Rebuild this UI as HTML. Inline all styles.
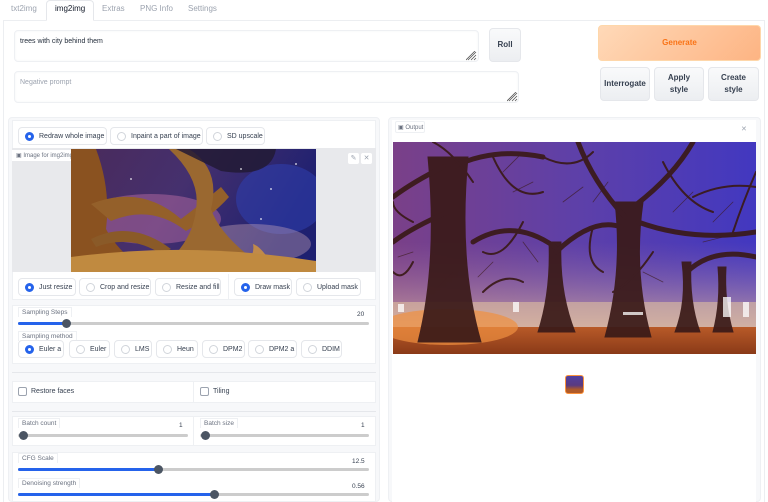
<!DOCTYPE html>
<html><head><meta charset="utf-8"><style>
*{box-sizing:border-box;margin:0;padding:0}
body{width:768px;height:502px;overflow:hidden;background:#fff;font-family:"Liberation Sans",sans-serif;font-size:7px;color:#374151;position:relative}
.a{position:absolute}
.tab{position:absolute;top:4px;font-size:8px;color:#9ca3af}
.ta{position:absolute;border:1px solid #eef0f3;border-radius:4px;background:#fff;box-shadow:inset 0 0 2px #f3f4f6}
.btn{position:absolute;border:1px solid #e5e7eb;border-radius:4px;background:linear-gradient(#f9fafb,#eceef1);font-weight:bold;font-size:8px;color:#374151;display:flex;align-items:center;justify-content:center;text-align:center;line-height:12px}
.box{position:absolute;background:#fff;border:1px solid #eef0f3}
.r{position:absolute;height:18px;border:1px solid #e5e7eb;border-radius:4px;background:#fff;font-size:7px;display:flex;align-items:center;padding-left:6px;color:#374151}
.r i{display:inline-block;width:9px;height:9px;border-radius:50%;border:1px solid #d1d5db;margin-right:5px;background:#fff}
.r i.on{border:3px solid #2563eb;background:#fff}
.lbl{position:absolute;font-size:6.5px;color:#6b7280;background:#fff;border:1px solid #eef0f3;border-bottom:none;padding:0 3px;line-height:9px}
.tr{position:absolute;height:3px;border-radius:2px;background:#ccc}
.fill{position:absolute;height:3px;border-radius:2px;background:#2563eb}
.th{position:absolute;width:9px;height:9px;border-radius:50%;background:#4b5563}
.val{position:absolute;font-size:6.5px;color:#374151}
.cb{position:absolute;width:9px;height:9px;border:1px solid #9ca3af;border-radius:2px;background:#fff}
</style></head><body>
<div class="tab" style="left:11px">txt2img</div>
<div class="a" style="left:46px;top:0;width:48px;height:21px;border:1px solid #e5e7eb;border-bottom:1px solid #fff;border-radius:4px 4px 0 0;background:#fff;z-index:2"></div>
<div class="tab" style="left:55px;color:#111827;z-index:3">img2img</div>
<div class="tab" style="left:102px">Extras</div>
<div class="tab" style="left:140px">PNG Info</div>
<div class="tab" style="left:188px">Settings</div>
<div class="a" style="left:3px;top:20px;width:762px;height:482px;border:1px solid #eceef1;border-bottom:none"></div>

<div class="ta" style="left:14px;top:30px;width:465px;height:32px"><span class="a" style="left:5px;top:7px;font-size:7px;color:#1f2937">trees with city behind them</span></div>
<div class="ta" style="left:14px;top:71px;width:505px;height:32px"><span class="a" style="left:5px;top:7px;font-size:7px;color:#9ca3af">Negative prompt</span></div>
<svg class="a" style="left:466px;top:51px" width="11" height="10"><path d="M2 9L10 1M5 9L10 4M8 9L10 7M0 9L9 0" stroke="#555" stroke-width=".8"/></svg>
<svg class="a" style="left:507px;top:92px" width="11" height="10"><path d="M2 9L10 1M5 9L10 4M8 9L10 7M0 9L9 0" stroke="#555" stroke-width=".8"/></svg>
<div class="btn" style="left:489px;top:28px;width:32px;height:34px">Roll</div>
<div class="btn" style="left:598px;top:25px;width:163px;height:36px;background:linear-gradient(135deg,#ffd9b8,#fdb483);border-color:#fed7aa;color:#f97316">Generate</div>
<div class="btn" style="left:600px;top:67px;width:50px;height:34px">Interrogate</div>
<div class="btn" style="left:654px;top:67px;width:50px;height:34px">Apply<br>style</div>
<div class="btn" style="left:708px;top:67px;width:51px;height:34px">Create<br>style</div>

<div class="a" style="left:8px;top:117px;width:372px;height:385px;background:#f7f8fa;border:1px solid #eef0f3;border-radius:4px"></div>
<div class="box" style="left:12px;top:120px;width:364px;height:180px"></div>
<div class="r" style="left:18px;top:127px;width:89px"><i class="on"></i>Redraw whole image</div>
<div class="r" style="left:110px;top:127px;width:93px"><i></i>Inpaint a part of image</div>
<div class="r" style="left:206px;top:127px;width:59px"><i></i>SD upscale</div>
<div class="a" style="left:12px;top:148px;width:364px;height:124px;background:#e8e9ec"></div>
<div class="a" style="left:12px;top:150px;width:62px;height:11px;background:#fff;border-radius:0 0 3px 0;font-size:6px;color:#6b7280;padding:2px 0 0 4px">▣ Image for img2img</div>
<svg class="a" style="left:71px;top:149px" width="245" height="123" viewBox="0 0 245 123">
<defs><linearGradient id="s1" x1="0" y1="0" x2="1" y2="0.3"><stop offset="0" stop-color="#4a2a5a"/><stop offset=".5" stop-color="#45306e"/><stop offset="1" stop-color="#1e2070"/></linearGradient></defs>
<rect width="245" height="123" fill="url(#s1)"/>
<ellipse cx="80" cy="70" rx="70" ry="25" fill="#c070a8" opacity=".45"/>
<ellipse cx="210" cy="50" rx="45" ry="35" fill="#3040b0" opacity=".55"/>
<ellipse cx="180" cy="95" rx="60" ry="20" fill="#e0b8c0" opacity=".35"/>
<path d="M0 123L0 0L25 0Q40 40 35 80Q45 100 75 123Z" fill="#8a5220"/>
<path d="M20 55Q70 35 110 70Q130 55 150 38L158 48Q140 68 115 82Q80 55 40 72Z" fill="#94602a"/>
<path d="M20 90Q60 70 100 100L90 105Q60 85 25 98Z" fill="#8a5a28"/>
<path d="M118 0Q150 20 140 60Q150 90 200 123L85 123Q122 95 125 60Q130 30 98 0Z" fill="#9a6830"/>
<path d="M165 123Q185 110 182 95Q192 98 205 123Z" fill="#c08a4a"/>
<path d="M0 108Q120 92 245 112L245 123L0 123Z" fill="#c08a40"/>
<path d="M105 0L205 0Q200 30 150 22Z" fill="#221a35" opacity=".85"/>
<g fill="#fff" opacity=".7"><circle cx="170" cy="20" r="1"/><circle cx="200" cy="40" r="1"/><circle cx="225" cy="15" r="1"/><circle cx="60" cy="30" r="1"/><circle cx="190" cy="70" r="1"/></g>
</svg>
<div class="a" style="left:348px;top:153px;width:11px;height:11px;background:#fff;border-radius:2px;font-size:7px;color:#9ca3af;text-align:center;line-height:11px">✎</div>
<div class="a" style="left:361px;top:153px;width:11px;height:11px;background:#fff;border-radius:2px;font-size:7px;color:#9ca3af;text-align:center;line-height:11px">✕</div>
<div class="r" style="left:18px;top:278px;width:58px"><i class="on"></i>Just resize</div>
<div class="r" style="left:79px;top:278px;width:72px"><i></i>Crop and resize</div>
<div class="r" style="left:155px;top:278px;width:66px"><i></i>Resize and fill</div>
<div class="a" style="left:228px;top:274px;width:1px;height:26px;background:#eef0f3"></div>
<div class="r" style="left:234px;top:278px;width:58px"><i class="on"></i>Draw mask</div>
<div class="r" style="left:296px;top:278px;width:65px"><i></i>Upload mask</div>

<div class="box" style="left:12px;top:305px;width:364px;height:59px"></div>
<div class="lbl" style="left:18px;top:307px">Sampling Steps</div>
<div class="val" style="left:357px;top:311px">20</div>
<div class="tr" style="left:18px;top:322px;width:351px"></div><div class="fill" style="left:18px;top:322px;width:48px"></div><div class="th" style="left:62px;top:319px"></div>
<div class="lbl" style="left:18px;top:331px">Sampling method</div>
<div class="r" style="left:18px;top:340px;width:46px"><i class="on"></i>Euler a</div>
<div class="r" style="left:69px;top:340px;width:41px"><i></i>Euler</div>
<div class="r" style="left:114px;top:340px;width:38px"><i></i>LMS</div>
<div class="r" style="left:156px;top:340px;width:42px"><i></i>Heun</div>
<div class="r" style="left:202px;top:340px;width:43px"><i></i>DPM2</div>
<div class="r" style="left:248px;top:340px;width:49px"><i></i>DPM2 a</div>
<div class="r" style="left:301px;top:340px;width:41px"><i></i>DDIM</div>
<div class="a" style="left:12px;top:372px;width:364px;height:1px;background:#e5e7eb"></div>

<div class="box" style="left:12px;top:381px;width:364px;height:22px"></div>
<div class="cb" style="left:18px;top:387px"></div><div class="a" style="left:31px;top:388px;font-size:7px">Restore faces</div>
<div class="a" style="left:193px;top:381px;width:1px;height:22px;background:#eef0f3"></div>
<div class="cb" style="left:200px;top:387px"></div><div class="a" style="left:213px;top:388px;font-size:7px">Tiling</div>
<div class="a" style="left:12px;top:411px;width:364px;height:1px;background:#e5e7eb"></div>

<div class="box" style="left:12px;top:416px;width:364px;height:30px"></div>
<div class="a" style="left:193px;top:416px;width:1px;height:30px;background:#eef0f3"></div>
<div class="lbl" style="left:18px;top:418px">Batch count</div><div class="val" style="left:179px;top:422px">1</div>
<div class="tr" style="left:18px;top:434px;width:170px"></div><div class="th" style="left:19px;top:431px"></div>
<div class="lbl" style="left:200px;top:418px">Batch size</div><div class="val" style="left:361px;top:422px">1</div>
<div class="tr" style="left:200px;top:434px;width:169px"></div><div class="th" style="left:201px;top:431px"></div>

<div class="box" style="left:12px;top:452px;width:364px;height:50px"></div>
<div class="lbl" style="left:18px;top:453px">CFG Scale</div><div class="val" style="left:352px;top:458px">12.5</div>
<div class="tr" style="left:18px;top:468px;width:351px"></div><div class="fill" style="left:18px;top:468px;width:140px"></div><div class="th" style="left:154px;top:465px"></div>
<div class="lbl" style="left:18px;top:478px">Denoising strength</div><div class="val" style="left:352px;top:483px">0.56</div>
<div class="tr" style="left:18px;top:493px;width:351px"></div><div class="fill" style="left:18px;top:493px;width:196px"></div><div class="th" style="left:210px;top:490px"></div>

<div class="a" style="left:388px;top:117px;width:373px;height:385px;background:#f7f8fa;border:1px solid #eef0f3;border-radius:4px"></div>
<div class="box" style="left:392px;top:120px;width:364px;height:382px;border:none"></div>
<div class="a" style="left:395px;top:121px;width:30px;height:12px;font-size:6px;color:#6b7280;border:1px solid #eef0f3;border-radius:2px;padding:2px 0 0 2px">▣ Output</div>
<div class="a" style="left:741px;top:125px;font-size:7px;color:#9ca3af">✕</div>
<svg class="a" style="left:393px;top:142px" width="363" height="212" viewBox="0 0 363 212">
<defs><linearGradient id="s2" x1="0" y1="0" x2="1" y2="0"><stop offset="0" stop-color="#7a4088"/><stop offset=".5" stop-color="#5e40a8"/><stop offset="1" stop-color="#4238c0"/></linearGradient>
<linearGradient id="gr" x1="0" y1="0" x2="0" y2="1"><stop offset="0" stop-color="#b85a28"/><stop offset="1" stop-color="#8a3a18"/></linearGradient>
<linearGradient id="hz" x1="0" y1="0" x2="0" y2="1"><stop offset="0" stop-color="#a070a0" stop-opacity="0"/><stop offset="1" stop-color="#d8b0a0"/></linearGradient></defs>
<rect width="363" height="212" fill="url(#s2)"/>
<rect y="100" width="363" height="85" fill="url(#hz)" opacity=".8"/>
<rect y="160" width="363" height="25" fill="#e0c0a0" opacity=".6"/>
<rect y="185" width="363" height="27" fill="url(#gr)"/>
<ellipse cx="55" cy="185" rx="70" ry="18" fill="#f09040" opacity=".7"/>
<g fill="#3a1a18" stroke="#3a1a18" stroke-linecap="round" opacity=".92">
<path d="M25 200Q45 120 35 15L75 15Q65 120 88 200Z"/>
<path d="M145 190Q158 150 156 100L168 100Q166 150 182 190Z"/>
<path d="M212 195Q230 130 222 60L250 60Q240 130 258 195Z"/>
<path d="M282 190Q294 160 289 120L298 120Q296 160 307 190Z"/>
<path d="M320 190Q328 160 325 125L333 125Q331 160 340 190Z"/>
<g fill="none" stroke-width="5"><path d="M60 25Q100 5 150 15M50 25Q20 40 0 55M55 70Q20 85 0 100M162 105Q120 75 80 100M163 110Q200 75 228 85M232 75Q200 40 185 0M240 65Q280 35 300 0M245 80Q300 100 363 90M294 130Q320 105 363 115"/></g>
<g fill="none" stroke-width="2"><path d="M100 15Q120 60 150 50M20 120Q10 140 0 130M130 80Q110 120 90 110M200 85Q190 120 210 130M300 55Q330 40 363 45M270 20Q290 60 320 70M90 150Q110 130 130 140M150 15Q180 30 200 10M80 40Q60 10 40 0M340 90Q350 60 363 30M260 110Q240 140 220 150M20 80Q0 70 0 60"/></g>
<g fill="none" stroke-width=".8" opacity=".7"><path d="M110 30L130 10M120 50L140 40M170 60L190 45M200 60L215 40M280 70L300 50M320 80L340 60M20 110L5 115M100 120L85 135M250 130L270 140M310 100L330 95M60 130L45 145M130 100L145 120"/></g>
</g>
<g fill="#fff" opacity=".75"><rect x="120" y="160" width="6" height="10"/><rect x="330" y="155" width="8" height="20"/><rect x="350" y="160" width="6" height="15"/><rect x="5" y="162" width="6" height="8"/><rect x="230" y="170" width="20" height="3"/></g>
</svg>
<div class="a" style="left:565px;top:375px;width:19px;height:19px;border:1.5px solid #fb923c;border-radius:3px;background:linear-gradient(#5040a0 0%,#5a3a80 55%,#b05a28 80%)"></div>
</body></html>
